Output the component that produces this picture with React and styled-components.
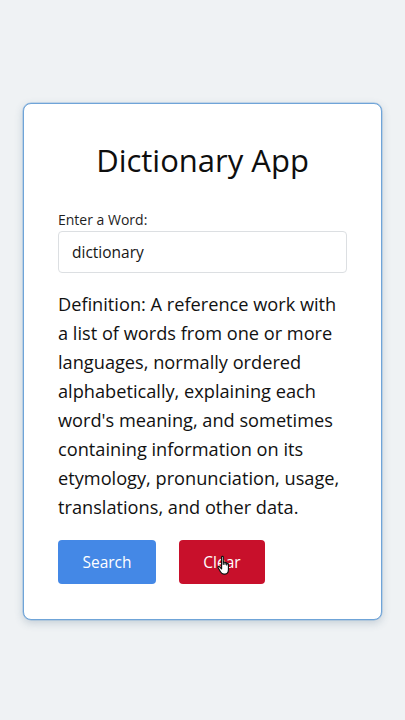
import { useState } from "react";
import styled, { createGlobalStyle } from "styled-components";

const GlobalStyle = createGlobalStyle`
  html, body {
    margin: 0;
    padding: 0;
    background: #eff2f4;
  }
  body {
    font-family: "Open Sans", "Noto Sans", sans-serif;
    color: #141414;
  }
`;

const Page = styled.div`
  width: 405px;
  height: 720px;
  box-sizing: border-box;
  padding: 103px 23px 0 23px;
`;

const Card = styled.div`
  box-sizing: border-box;
  width: 359px;
  height: 517px;
  background: #ffffff;
  border: 1px solid #6fa4d8;
  border-radius: 8px;
  box-shadow: 0 0 0 0.5px rgba(111, 164, 216, 0.6), 0 3px 8px rgba(60, 90, 120, 0.24);
  padding: 35px 34px 0 34px;
`;

const Title = styled.h1`
  margin: 0;
  text-align: center;
  font-size: 31px;
  font-weight: 400;
  line-height: 42px;
  color: #0e0e0e;
`;

const Label = styled.label`
  display: block;
  margin-top: 31px;
  font-size: 14px;
  line-height: 16px;
  color: #1e1e1e;
`;

const Input = styled.input`
  display: block;
  box-sizing: border-box;
  width: 289px;
  height: 42px;
  margin-top: 3px;
  padding: 0 13px;
  border: 1px solid #dcdfe2;
  border-radius: 4px;
  font-family: inherit;
  font-size: 15.5px;
  color: #161616;
  outline: none;
`;

const Definition = styled.p`
  margin: 17px 0 0 0;
  width: 289px;
  font-size: 18.2px;
  line-height: 29px;
  color: #111;
`;

const Actions = styled.div`
  display: flex;
  gap: 23px;
  margin-top: 18px;
`;

const Button = styled.button`
  position: relative;
  height: 44px;
  width: ${(p) => p.$width}px;
  border: none;
  border-radius: 4px;
  background: ${(p) => p.$bg};
  color: #fff;
  font-family: inherit;
  font-size: 15.5px;
  cursor: pointer;
`;

const Pointer = styled.svg`
  position: absolute;
  left: 38px;
  top: 15px;
`;

const definitionText =
  "Definition: A reference work with a list of words from one or more languages, normally ordered alphabetically, explaining each word's meaning, and sometimes containing information on its etymology, pronunciation, usage, translations, and other data.";

// hand pointer hovering the Clear button
function HandCursor() {
  return (
    <Pointer width="16" height="21" viewBox="0 0 14 18">
      <path
        d="M4 1.5c0-.8 1.5-.8 1.5 0V8V6.5c0-.8 1.5-.8 1.5 0V8V7c0-.8 1.5-.8 1.5 0v1.5V8c0-.8 1.5-.8 1.5 0v4.5c0 2-1 4-3 4H6c-1.5 0-2.3-.8-3-2L1 11c-.5-.8.5-1.6 1.2-.9L4 12z"
        fill="#fff"
        stroke="#111"
        strokeWidth="1"
        strokeLinejoin="round"
      />
    </Pointer>
  );
}

export default function App() {
  const [word, setWord] = useState("dictionary");
  return (
    <>
      <GlobalStyle />
      <Page>
        <Card>
          <Title>Dictionary App</Title>
          <Label>Enter a Word:</Label>
          <Input value={word} onChange={(e) => setWord(e.target.value)} />
          <Definition>{definitionText}</Definition>
          <Actions>
            <Button $bg="#4488e6" $width={98}>Search</Button>
            <Button $bg="#c8102b" $width={86}>
              Clear
              <HandCursor />
            </Button>
          </Actions>
        </Card>
      </Page>
    </>
  );
}
